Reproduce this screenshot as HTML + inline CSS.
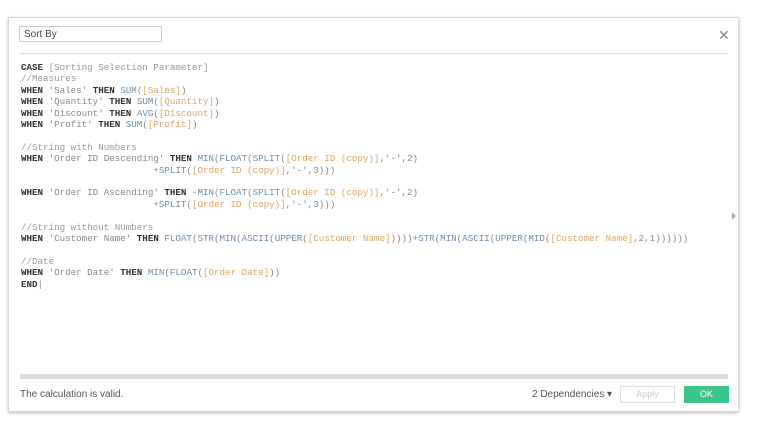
<!DOCTYPE html>
<html><head><style>
body{margin:0;width:768px;height:442px;background:#fff;position:relative;overflow:hidden;font-family:"Liberation Sans",sans-serif}
.dlg{position:absolute;left:8px;top:17px;width:729px;height:393px;border:1px solid #d8d8d8;box-shadow:0 1px 3px rgba(0,0,0,.25);background:#fff}
.name{position:absolute;left:10px;top:8px;height:16px;border:1px solid #ccc;font-size:10px;color:#444;line-height:16px;padding-left:4px;box-sizing:border-box;width:143px}
.sep{position:absolute;left:10px;right:10px;top:35px;height:1px;background:#ddd}
.x{position:absolute;left:709px;top:9px;font-size:14px;color:#888;font-weight:300}
pre{position:absolute;left:12px;top:44px;margin:0;font-family:"Liberation Mono",monospace;font-size:9.2px;line-height:11.4px;color:#888}
b{color:#333}
.f{color:#6b8fb0}
.d{color:#e0a468}
.c{color:#999}
.sb{position:absolute;left:11px;top:356px;width:708px;height:5px;background:#ddd}
.arr{position:absolute;left:723px;top:194px;width:0;height:0;border-left:4px solid #aaa;border-top:4px solid transparent;border-bottom:4px solid transparent}
.st{position:absolute;left:11px;top:371px;font-size:10px;color:#555}
.dep{position:absolute;left:523px;top:371px;font-size:10px;color:#555}
.ap{position:absolute;left:611px;top:368px;width:55px;height:17px;border:1px solid #ddd;box-sizing:border-box;font-size:9px;color:#ccc;text-align:center;line-height:15px}
.ok{position:absolute;left:675px;top:368px;width:45px;height:17px;background:#3dc48b;font-size:9px;color:#fff;text-align:center;line-height:17px}
</style></head><body>
<div class="dlg">
<div class="name">Sort By</div>
<div class="x">✕</div>
<div class="sep"></div>
<pre><b>CASE</b> <span class="c">[Sorting Selection Parameter]</span>
<span class="c">//Measures</span>
<b>WHEN</b> 'Sales' <b>THEN</b> <span class="f">SUM</span>(<span class="d">[Sales]</span>)
<b>WHEN</b> 'Quantity' <b>THEN</b> <span class="f">SUM</span>(<span class="d">[Quantity]</span>)
<b>WHEN</b> 'Discount' <b>THEN</b> <span class="f">AVG</span>(<span class="d">[Discount]</span>)
<b>WHEN</b> 'Profit' <b>THEN</b> <span class="f">SUM</span>(<span class="d">[Profit]</span>)

<span class="c">//String with Numbers</span>
<b>WHEN</b> 'Order ID Descending' <b>THEN</b> <span class="f">MIN</span>(<span class="f">FLOAT</span>(<span class="f">SPLIT</span>(<span class="d">[Order ID (copy)]</span>,'-',2)
                        +<span class="f">SPLIT</span>(<span class="d">[Order ID (copy)]</span>,'-',3)))

<b>WHEN</b> 'Order ID Ascending' <b>THEN</b> -<span class="f">MIN</span>(<span class="f">FLOAT</span>(<span class="f">SPLIT</span>(<span class="d">[Order ID (copy)]</span>,'-',2)
                        +<span class="f">SPLIT</span>(<span class="d">[Order ID (copy)]</span>,'-',3)))

<span class="c">//String without Numbers</span>
<b>WHEN</b> 'Customer Name' <b>THEN</b> <span class="f">FLOAT</span>(<span class="f">STR</span>(<span class="f">MIN</span>(<span class="f">ASCII</span>(<span class="f">UPPER</span>(<span class="d">[Customer Name]</span>))))+<span class="f">STR</span>(<span class="f">MIN</span>(<span class="f">ASCII</span>(<span class="f">UPPER</span>(<span class="f">MID</span>(<span class="d">[Customer Name]</span>,2,1))))))

<span class="c">//Date</span>
<b>WHEN</b> 'Order Date' <b>THEN</b> <span class="f">MIN</span>(<span class="f">FLOAT</span>(<span class="d">[Order Date]</span>))
<b>END</b>|</pre>
<div class="arr"></div>
<div class="sb"></div>
<div class="st">The calculation is valid.</div>
<div class="dep">2 Dependencies ▾</div>
<div class="ap">Apply</div>
<div class="ok">OK</div>
</div>
</body></html>
